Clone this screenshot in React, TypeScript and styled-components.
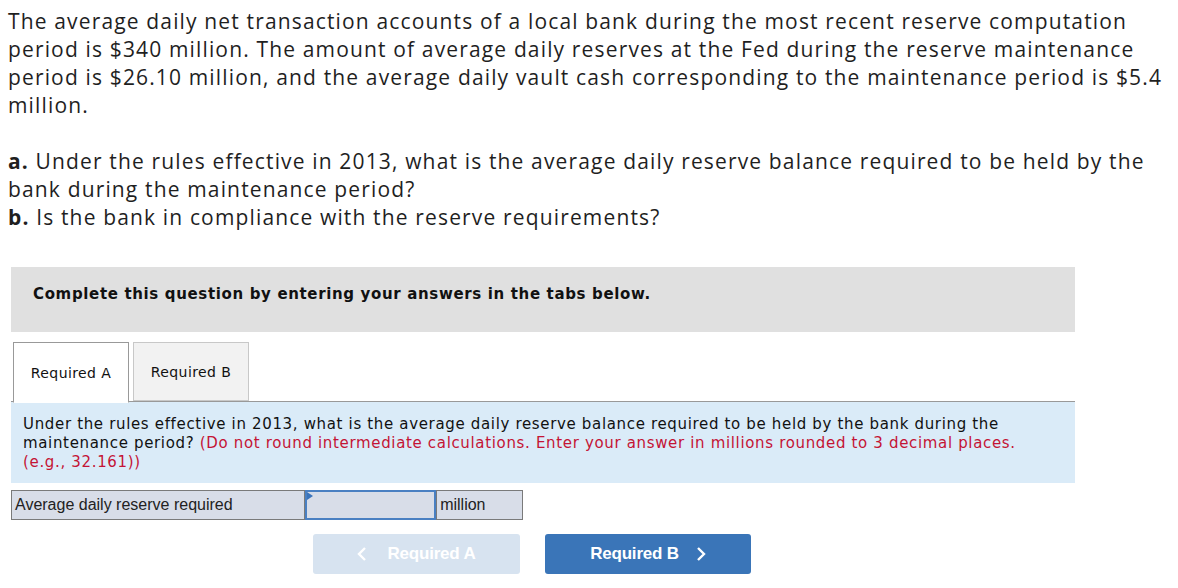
import React from "react";
import styled, { createGlobalStyle } from "styled-components";

const Global = createGlobalStyle`
  html, body { margin: 0; padding: 0; background: #fff; }
  body { font-family: "Open Sans", sans-serif; color: #1a1a1a; }
`;

const Page = styled.div`
  width: 1178px;
  padding-top: 7px;
`;

const Question = styled.p`
  margin: 0 0 28px 0;
  padding: 0 0 0 8px;
  font-family: "Open Sans", sans-serif;
  font-size: 21px;
  line-height: 28px;
  letter-spacing: 1.15px;
  white-space: nowrap;
  color: #1f1f1f;
  &:last-of-type { margin-bottom: 36px; }
`;

const Part = styled.b`
  font-weight: 700;
`;

const Panel = styled.div`
  margin-left: 11px;
  width: 1064px;
`;

const Banner = styled.div`
  height: 65px;
  box-sizing: border-box;
  background: #e0e0e0;
  padding: 18px 0 0 22px;
  line-height: 18px;
  font-family: "DejaVu Sans", Verdana, sans-serif;
  font-weight: 700;
  font-size: 15px;
  letter-spacing: 0.65px;
  color: #111;
`;

const TabRow = styled.div`
  margin-top: 10px;
  display: flex;
  gap: 4px;
  padding-left: 2px;
  border-bottom: 1px solid #999;
  height: 59px;
`;

const Tab = styled.div<{ $active?: boolean }>`
  width: 114px;
  height: ${(p) => (p.$active ? 59 : 57)}px;
  box-sizing: content-box;
  border: 1px solid ${(p) => (p.$active ? "#999" : "#c8c8c8")};
  border-bottom: ${(p) => (p.$active ? "1px solid #fff" : "1px solid #c8c8c8")};
  background: ${(p) => (p.$active ? "#fff" : "#f2f2f2")};
  display: flex;
  align-items: center;
  justify-content: center;
  font-family: "DejaVu Sans", Tahoma, sans-serif;
  font-size: 14px;
  letter-spacing: 0.4px;
  color: #111;
  position: relative;
  z-index: ${(p) => (p.$active ? 1 : 0)};
`;

const InfoBox = styled.div`
  background: #daebf8;
  padding: 13px 12px 11px 12px;
  font-family: "DejaVu Sans", Verdana, sans-serif;
  font-size: 15px;
  line-height: 19px;
  letter-spacing: 0.66px;
  white-space: nowrap;
  color: #111;
  height: 57px;
`;

const Hint = styled.span`
  color: #c41435;
`;

const AnswerRow = styled.div`
  margin-top: 7px;
  display: flex;
  height: 30px;
  width: 512px;
  font-family: "Liberation Sans", Arial, sans-serif;
  font-size: 16px;
  color: #222;
`;

const Cell = styled.div<{ $w: number }>`
  width: ${(p) => p.$w}px;
  box-sizing: border-box;
  background: #d8dde8;
  border: 1px solid #7a7a7a;
  display: flex;
  align-items: center;
  padding-left: 3px;
  & + & { border-left: none; }
`;

const InputCell = styled.div`
  width: 131px;
  box-sizing: border-box;
  background: #d8dde8;
  border: 2px solid #4a80c2;
  position: relative;
`;

const Flag = styled.span`
  position: absolute;
  left: 0;
  top: 0;
  width: 0;
  height: 0;
  border-top: 4px solid transparent;
  border-bottom: 4px solid transparent;
  border-left: 6px solid #3a74bb;
`;

const NavRow = styled.div`
  margin-top: 14px;
  margin-left: 302px;
  display: flex;
  gap: 25px;
`;

const NavButton = styled.div<{ $disabled?: boolean }>`
  width: ${(p) => (p.$disabled ? 207 : 206)}px;
  height: 40px;
  border-radius: 3px;
  background: ${(p) => (p.$disabled ? "#d7e3f0" : "#3a75b8")};
  color: #fff;
  display: flex;
  align-items: center;
  justify-content: center;
  gap: ${(p) => (p.$disabled ? 20 : 17)}px;
  font-family: "Liberation Sans", Arial, sans-serif;
  font-weight: 700;
  font-size: 17px;
  letter-spacing: -0.2px;
`;

const Chevron = ({ dir }: { dir: "left" | "right" }) => (
  <svg width="10" height="16" viewBox="0 0 10 16" fill="none">
    <polyline
      points={dir === "left" ? "8,2 2,8 8,14" : "2,2 8,8 2,14"}
      stroke="#fff"
      strokeWidth="2.4"
      strokeLinecap="butt"
      strokeLinejoin="miter"
    />
  </svg>
);

export default function App() {
  return (
    <>
      <Global />
      <Page>
        <Question>
          The average daily net transaction accounts of a local bank during the most recent reserve computation
          <br />
          period is $340 million. The amount of average daily reserves at the Fed during the reserve maintenance
          <br />
          period is $26.10 million, and the average daily vault cash corresponding to the maintenance period is $5.4
          <br />
          million.
        </Question>
        <Question>
          <Part>a.</Part> Under the rules effective in 2013, what is the average daily reserve balance required to be held by the
          <br />
          bank during the maintenance period?
          <br />
          <Part>b.</Part> Is the bank in compliance with the reserve requirements?
        </Question>
        <Panel>
          <Banner>Complete this question by entering your answers in the tabs below.</Banner>
          <TabRow>
            <Tab $active>Required A</Tab>
            <Tab>Required B</Tab>
          </TabRow>
          <InfoBox>
            Under the rules effective in 2013, what is the average daily reserve balance required to be held by the bank during the
            <br />
            maintenance period?{" "}
            <Hint>
              (Do not round intermediate calculations. Enter your answer in millions rounded to 3 decimal places.
              <br />
              (e.g., 32.161))
            </Hint>
          </InfoBox>
          <AnswerRow>
            <Cell $w={295}>Average daily reserve required</Cell>
            <InputCell>
              <Flag />
            </InputCell>
            <Cell $w={87}>million</Cell>
          </AnswerRow>
          <NavRow>
            <NavButton $disabled>
              <Chevron dir="left" />
              Required A
            </NavButton>
            <NavButton>
              Required B
              <Chevron dir="right" />
            </NavButton>
          </NavRow>
        </Panel>
      </Page>
    </>
  );
}
